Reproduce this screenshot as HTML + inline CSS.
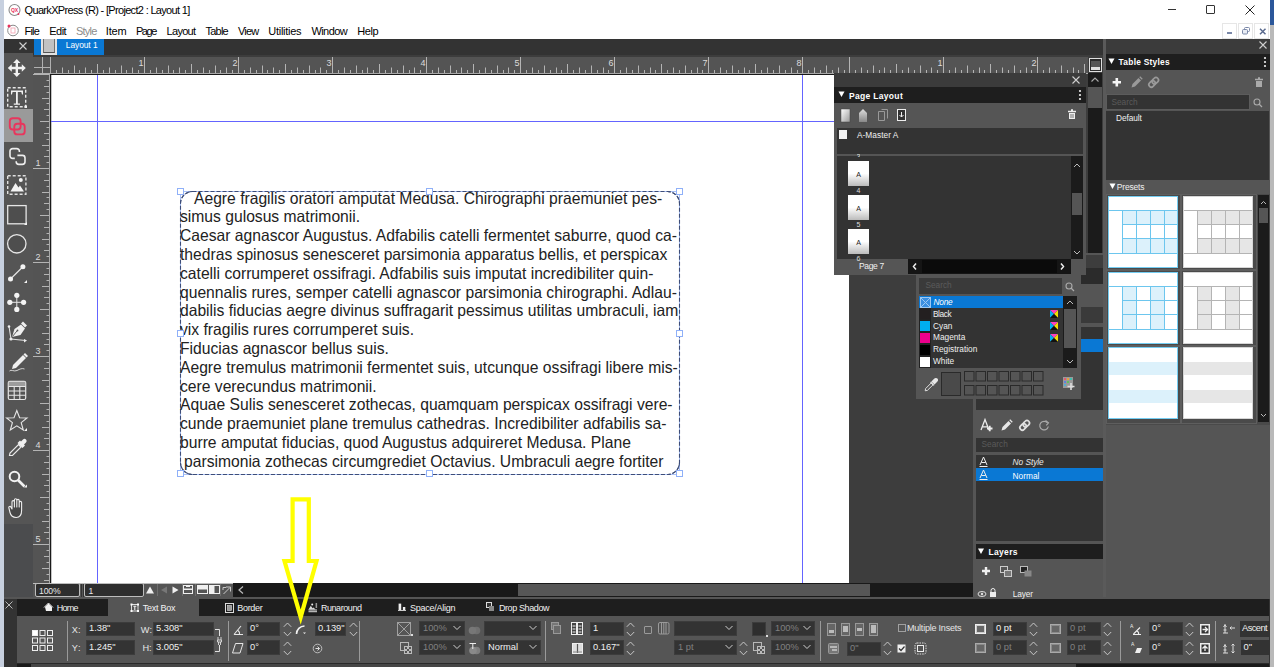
<!DOCTYPE html>
<html><head><meta charset="utf-8"><style>
html,body{margin:0;padding:0;}
body{width:1274px;height:667px;overflow:hidden;position:relative;background:#333;font-family:"Liberation Sans",sans-serif;}
.a{position:absolute;}
.t{white-space:nowrap;line-height:1.15;}
.body{font-size:15.67px;line-height:18.8px;color:#222;white-space:nowrap;}
</style></head><body>
<div class="a" style="left:0px;top:0px;width:4px;height:667px;background:#c7d0df;"></div>
<div class="a" style="left:4px;top:0px;width:1266px;height:39px;background:#ffffff;"></div>
<div class="a" style="left:1270px;top:0px;width:4px;height:25px;background:#2b579a;"></div>
<div class="a" style="left:1270px;top:25px;width:4px;height:642px;background:#b9b9b9;"></div>
<svg class="a" style="left:7px;top:3px" width="15" height="15" viewBox="0 0 15 15"><circle cx="7.5" cy="7" r="5.5" fill="none" stroke="#8a8a8a" stroke-width="1.1"/><text x="7.5" y="8.7" font-size="5" font-family="Liberation Sans" font-weight="bold" fill="#e8305a" text-anchor="middle">QX</text><circle cx="11.5" cy="11" r="0.9" fill="#e8305a"/></svg>
<div class="a t" style="left:24.60px;top:4px;font-size:11px;color:#000;letter-spacing:-0.676px;">QuarkXPress (R) - [Project2 : Layout 1]</div>
<div class="a" style="left:1168px;top:9px;width:8px;height:1px;background:#333;"></div>
<div class="a" style="left:1206px;top:5px;width:9px;height:9px;border:1px solid #333;border-radius:1px;box-sizing:border-box;"></div>
<svg class="a" style="left:1245px;top:5px" width="10" height="10"><path d="M0.5 0.5L9.5 9.5M9.5 0.5L0.5 9.5" stroke="#222" stroke-width="1"/></svg>
<div class="a" style="left:1222px;top:23px;width:15px;height:16px;background:#fff;border:1px solid #e6e6e6;box-sizing:border-box;"></div>
<div class="a" style="left:1238px;top:23px;width:15px;height:16px;background:#fff;border:1px solid #e6e6e6;box-sizing:border-box;"></div>
<div class="a" style="left:1254px;top:23px;width:15px;height:16px;background:#fff;border:1px solid #e6e6e6;box-sizing:border-box;"></div>
<div class="a" style="left:1227px;top:32px;width:5px;height:2px;background:#7a88a8;"></div>
<svg class="a" style="left:1242px;top:27px" width="9" height="8"><rect x="2.5" y="0.5" width="5" height="4" rx="1" fill="none" stroke="#7a88a8"/><rect x="0.5" y="2.5" width="5" height="4.5" rx="1" fill="#e8ecf4" stroke="#7a88a8"/></svg>
<svg class="a" style="left:1259px;top:28px" width="8" height="7"><path d="M1 0.8L6.5 6.2M6.5 0.8L1 6.2" stroke="#5a6a8e" stroke-width="1.5"/></svg>
<svg class="a" style="left:6px;top:23px" width="15" height="15" viewBox="0 0 15 15"><circle cx="7" cy="7.5" r="5.3" fill="none" stroke="#8a8a8a" stroke-width="1"/><rect x="5" y="5" width="4" height="5" fill="none" stroke="#f2a0b0" stroke-width="0.8"/><circle cx="3" cy="3" r="1.5" fill="#e8305a"/></svg>
<div class="a t" style="left:24.60px;top:25px;font-size:11px;color:#000;letter-spacing:-0.836px;">File</div>
<div class="a t" style="left:49.20px;top:25px;font-size:11px;color:#000;letter-spacing:-0.499px;">Edit</div>
<div class="a t" style="left:75.90px;top:25px;font-size:11px;color:#8c8c8c;letter-spacing:-0.759px;">Style</div>
<div class="a t" style="left:105.80px;top:25px;font-size:11px;color:#000;letter-spacing:-0.210px;">Item</div>
<div class="a t" style="left:135.90px;top:25px;font-size:11px;color:#000;letter-spacing:-1.391px;">Page</div>
<div class="a t" style="left:166.60px;top:25px;font-size:11px;color:#000;letter-spacing:-0.714px;">Layout</div>
<div class="a t" style="left:205.50px;top:25px;font-size:11px;color:#000;letter-spacing:-0.770px;">Table</div>
<div class="a t" style="left:237.90px;top:25px;font-size:11px;color:#000;letter-spacing:-0.767px;">View</div>
<div class="a t" style="left:268.30px;top:25px;font-size:11px;color:#000;letter-spacing:-0.281px;">Utilities</div>
<div class="a t" style="left:311.40px;top:25px;font-size:11px;color:#000;letter-spacing:-0.556px;">Window</div>
<div class="a t" style="left:357.30px;top:25px;font-size:11px;color:#000;letter-spacing:-0.468px;">Help</div>
<div class="a" style="left:4px;top:39px;width:1266px;height:628px;background:#333333;"></div>
<svg class="a" style="left:18px;top:41px" width="10" height="10"><path d="M1.5 1.5L8.5 8.5M8.5 1.5L1.5 8.5" stroke="#d0d0d0" stroke-width="1.1"/></svg>
<div class="a" style="left:34px;top:39px;width:70px;height:17px;background:#0a78d4;"></div>
<div class="a" style="left:41px;top:39px;width:16px;height:16px;background:#e2e2e2;"></div>
<div class="a" style="left:43px;top:39px;width:12px;height:14px;background:#c2c2c2;border-left:1px solid #707070;border-right:1px solid #707070;border-bottom:1px solid #555;box-sizing:border-box;"></div>
<div class="a t" style="left:65.80px;top:41px;font-size:8.4px;color:#ffffff;letter-spacing:-0.053px;">Layout 1</div>
<div class="a" style="left:4px;top:53px;width:29px;height:471px;background:#555555;"></div>
<div class="a" style="left:4px;top:524px;width:29px;height:73px;background:#4b4c4e;"></div>
<div class="a" style="left:4px;top:109px;width:29px;height:33px;background:#9a9a9a;"></div>
<svg class="a" style="left:4px;top:55px" width="29" height="470" viewBox="4 55 29 470">
<g fill="#f2f2f2" stroke="none">
<path d="M16.8 59L20.5 63H18V66.8H21.8V64.3L25.8 68L21.8 71.7V69.2H18V73H20.5L16.8 77L13.1 73H15.6V69.2H11.8V71.7L7.8 68L11.8 64.3V66.8H15.6V63H13.1Z"/>
</g>
<g fill="none" stroke="#e8e8e8" stroke-width="1.4">
<rect x="7.7" y="87.7" width="18" height="19" stroke-dasharray="3 2"/>
</g>
<path d="M11 90.5H23V94.5H22L21.3 92H17.8V103.5H20V104.8H13.8V103.5H16V92H12.6L11.9 94.5H11Z" fill="#f0f0f0"/>
<rect x="24.5" y="105.5" width="2.5" height="2.5" fill="#f0f0f0"/>
<g fill="none" stroke="#e8365d" stroke-width="1.9">
<rect x="9.8" y="118.3" width="10.8" height="11.2" rx="3"/>
<rect x="14.3" y="123.8" width="10.4" height="10.6" rx="3"/>
</g>
<g fill="none" stroke="#eeeeee" stroke-width="1.6">
<path d="M19.4 152V151.2A2.6 2.6 0 0 0 16.8 148.6H12.6A2.6 2.6 0 0 0 10 151.2V155.8A2.6 2.6 0 0 0 12.6 158.4H14.8"/>
<path d="M17.4 155.4H22.4A2.6 2.6 0 0 1 25 158V161.8A2.6 2.6 0 0 1 22.4 164.4H18.8A2.6 2.6 0 0 1 16.2 161.8V161.2"/>
</g>
<rect x="7.7" y="175.7" width="18.2" height="18.5" fill="none" stroke="#e0e0e0" stroke-width="1.4" stroke-dasharray="3 2"/>
<path d="M10.5 191.5L15.5 183L18.5 187.5L20 185.5L24 191.5Z" fill="#f4f4f4"/>
<circle cx="20.8" cy="180" r="2" fill="#f4f4f4"/>
<rect x="7.7" y="205.6" width="18.4" height="18.2" fill="#4e4e4e" stroke="#e6e6e6" stroke-width="1.3"/>
<path d="M27 222V225H24Z" fill="#f4f4f4"/>
<circle cx="16.8" cy="243.8" r="9.2" fill="#4e4e4e" stroke="#e6e6e6" stroke-width="1.3"/>
<path d="M10.5 279L22.9 266.8" stroke="#e6e6e6" stroke-width="1.2"/>
<circle cx="10.5" cy="279" r="2.5" fill="#f4f4f4"/><circle cx="22.9" cy="266.8" r="2.5" fill="#f4f4f4"/>
<path d="M27 280V283H24Z" fill="#f4f4f4"/>
<path d="M9.8 302.3H23.6M16.8 295.3V309.4" stroke="#e6e6e6" stroke-width="1"/>
<circle cx="16.8" cy="295.3" r="2.6" fill="#f4f4f4"/><circle cx="16.8" cy="309.4" r="2.6" fill="#f4f4f4"/>
<circle cx="9.8" cy="302.3" r="2.6" fill="#f4f4f4"/><circle cx="23.6" cy="302.3" r="2.6" fill="#f4f4f4"/>
<path d="M9 326.5L11 339L25.5 340.5" stroke="#e0e0e0" stroke-width="1.1" fill="none"/>
<circle cx="9" cy="326.5" r="1.3" fill="#eee"/><circle cx="11" cy="339" r="1.6" fill="#eee"/><path d="M24 339V342.5L27 340.5Z" fill="#eee"/>
<path d="M12 337L14.5 329L21 324.5L25 328.5L20.5 335Z" fill="#f0f0f0"/>
<path d="M21 323.5L23 321.5L27 325.5L25 327.5Z" fill="#f0f0f0"/>
<path d="M12.5 336.5L17.3 330.5" stroke="#555" stroke-width="0.9"/><circle cx="17.5" cy="330.5" r="0.9" fill="#555"/>
<path d="M13 365L23 355L26 358L16 368L12 369Z" fill="#f0f0f0"/><path d="M23.5 354.5L25 353L28 356L26.5 357.5Z" fill="#f0f0f0"/>
<path d="M9.5 371C11 369 14 372 17 370.5C20 369 22 368 24.5 369" stroke="#e0e0e0" fill="none" stroke-width="0.9"/>
<rect x="8.3" y="381.3" width="17.4" height="18.2" rx="1.5" fill="none" stroke="#e6e6e6" stroke-width="1.2"/>
<rect x="8.8" y="381.8" width="16.4" height="4.5" fill="#9d9d9d"/>
<path d="M8.5 386.5H25.5M8.5 391H25.5M8.5 395.2H25.5M14.2 386.5V399.5M19.8 386.5V399.5" stroke="#e6e6e6" stroke-width="1.1"/>
<path d="M16.8 410.5L19.6 417.7L27 417.9L21.2 422.6L23.3 430L16.8 425.8L10.3 430L12.4 422.6L6.6 417.9L14 417.7Z" fill="none" stroke="#e6e6e6" stroke-width="1.1"/>
<path d="M27 428V431H24Z" fill="#f4f4f4"/>
<path d="M9.5 455.5L10 453L18.5 444.5L21 447L12.5 455.5Z" fill="none" stroke="#eaeaea" stroke-width="1.2"/>
<path d="M17.5 443L20 440.5L21 441.5L23 439.5A2 2 0 0 1 26 442.5L24 444.5L25 445.5L22.5 448Z" fill="#f0f0f0"/>
<circle cx="14.5" cy="476.5" r="4.8" fill="none" stroke="#f2f2f2" stroke-width="2"/>
<path d="M18 480L24.5 486.5" stroke="#f2f2f2" stroke-width="2.6"/><path d="M24 487.5L27 487.5L27 484.5Z" fill="#f2f2f2"/>
<path d="M12 508V501.8A1.2 1.2 0 0 1 14.4 501.8V507V500A1.2 1.2 0 0 1 16.8 500V507V500.6A1.2 1.2 0 0 1 19.2 500.6V507V502.6A1.2 1.2 0 0 1 21.6 502.6V510.5Q21.6 517.5 16.2 517.5Q11.2 517.5 10 512.5L8.9 508A1.1 1.1 0 0 1 11 507.2L12 509Z" fill="#474747" stroke="#eeeeee" stroke-width="1.1" stroke-linejoin="round"/>
</svg>
<div class="a" style="left:33px;top:55px;width:1070px;height:542px;background:#3d3d3d;"></div>
<svg class="a" style="left:33px;top:57px" width="1055" height="17"><rect x="0" y="0" width="1055" height="17" fill="#545454"/><rect x="0" y="16" width="1055" height="1" fill="#a8a8a8"/><text x="110.5" y="8.6" font-size="9" font-family="Liberation Sans" fill="#dcdcdc" text-anchor="end">1</text><text x="204.5" y="8.6" font-size="9" font-family="Liberation Sans" fill="#dcdcdc" text-anchor="end">2</text><text x="298.5" y="8.6" font-size="9" font-family="Liberation Sans" fill="#dcdcdc" text-anchor="end">3</text><text x="392.5" y="8.6" font-size="9" font-family="Liberation Sans" fill="#dcdcdc" text-anchor="end">4</text><text x="486.5" y="8.6" font-size="9" font-family="Liberation Sans" fill="#dcdcdc" text-anchor="end">5</text><text x="580.5" y="8.6" font-size="9" font-family="Liberation Sans" fill="#dcdcdc" text-anchor="end">6</text><text x="674.5" y="8.6" font-size="9" font-family="Liberation Sans" fill="#dcdcdc" text-anchor="end">7</text><text x="768.5" y="8.6" font-size="9" font-family="Liberation Sans" fill="#dcdcdc" text-anchor="end">8</text><text x="909.5" y="8.6" font-size="9" font-family="Liberation Sans" fill="#dcdcdc" text-anchor="end">1</text><text x="1003.5" y="8.6" font-size="9" font-family="Liberation Sans" fill="#dcdcdc" text-anchor="end">2</text><path d="M17.5 0V16 M23.5 13V16 M29.5 10.5V16 M35.5 13V16 M41.5 8.5V16 M46.5 13V16 M52.5 10.5V16 M58.5 13V16 M64.5 7V16 M70.5 13V16 M76.5 10.5V16 M82.5 13V16 M88.5 8.5V16 M93.5 13V16 M99.5 10.5V16 M105.5 13V16 M111.5 0V16 M117.5 13V16 M123.5 10.5V16 M129.5 13V16 M135.5 8.5V16 M140.5 13V16 M146.5 10.5V16 M152.5 13V16 M158.5 7V16 M164.5 13V16 M170.5 10.5V16 M176.5 13V16 M182.5 8.5V16 M187.5 13V16 M193.5 10.5V16 M199.5 13V16 M205.5 0V16 M211.5 13V16 M217.5 10.5V16 M223.5 13V16 M229.5 8.5V16 M234.5 13V16 M240.5 10.5V16 M246.5 13V16 M252.5 7V16 M258.5 13V16 M264.5 10.5V16 M270.5 13V16 M276.5 8.5V16 M282.5 13V16 M287.5 10.5V16 M293.5 13V16 M299.5 0V16 M305.5 13V16 M311.5 10.5V16 M317.5 13V16 M323.5 8.5V16 M329.5 13V16 M334.5 10.5V16 M340.5 13V16 M346.5 7V16 M352.5 13V16 M358.5 10.5V16 M364.5 13V16 M370.5 8.5V16 M376.5 13V16 M381.5 10.5V16 M387.5 13V16 M393.5 0V16 M399.5 13V16 M405.5 10.5V16 M411.5 13V16 M417.5 8.5V16 M423.5 13V16 M428.5 10.5V16 M434.5 13V16 M440.5 7V16 M446.5 13V16 M452.5 10.5V16 M458.5 13V16 M464.5 8.5V16 M470.5 13V16 M475.5 10.5V16 M481.5 13V16 M487.5 0V16 M493.5 13V16 M499.5 10.5V16 M505.5 13V16 M511.5 8.5V16 M517.5 13V16 M523.5 10.5V16 M528.5 13V16 M534.5 7V16 M540.5 13V16 M546.5 10.5V16 M552.5 13V16 M558.5 8.5V16 M564.5 13V16 M570.5 10.5V16 M575.5 13V16 M581.5 0V16 M587.5 13V16 M593.5 10.5V16 M599.5 13V16 M605.5 8.5V16 M611.5 13V16 M617.5 10.5V16 M622.5 13V16 M628.5 7V16 M634.5 13V16 M640.5 10.5V16 M646.5 13V16 M652.5 8.5V16 M658.5 13V16 M664.5 10.5V16 M669.5 13V16 M675.5 0V16 M681.5 13V16 M687.5 10.5V16 M693.5 13V16 M699.5 8.5V16 M705.5 13V16 M711.5 10.5V16 M716.5 13V16 M722.5 7V16 M728.5 13V16 M734.5 10.5V16 M740.5 13V16 M746.5 8.5V16 M752.5 13V16 M758.5 10.5V16 M764.5 13V16 M769.5 0V16 M775.5 13V16 M781.5 10.5V16 M787.5 13V16 M793.5 8.5V16 M799.5 13V16 M805.5 10.5V16 M811.5 13V16 M816.5 0V16 M822.5 13V16 M828.5 10.5V16 M834.5 13V16 M840.5 8.5V16 M846.5 13V16 M851.5 10.5V16 M857.5 13V16 M863.5 7V16 M869.5 13V16 M875.5 10.5V16 M881.5 13V16 M887.5 8.5V16 M893.5 13V16 M898.5 10.5V16 M904.5 13V16 M910.5 0V16 M916.5 13V16 M922.5 10.5V16 M928.5 13V16 M934.5 8.5V16 M940.5 13V16 M946.5 10.5V16 M951.5 13V16 M957.5 7V16 M963.5 13V16 M969.5 10.5V16 M975.5 13V16 M981.5 8.5V16 M987.5 13V16 M993.5 10.5V16 M998.5 13V16 M1004.5 0V16 M1010.5 13V16 M1016.5 10.5V16 M1022.5 13V16 M1028.5 8.5V16 M1034.5 13V16 M1040.5 10.5V16 M1045.5 13V16 M1051.5 7V16" stroke="#b4b4b4" stroke-width="1" fill="none"/><rect x="0" y="0" width="17" height="17" fill="#545454"/><path d="M9.5 0V16M1 10.5H17M17.5 0V17M1 16.5H17" stroke="#b0b0b0" stroke-width="1"/></svg>
<svg class="a" style="left:33px;top:74px" width="18" height="509"><rect x="0" y="0" width="18" height="509" fill="#545454"/><rect x="16" y="0" width="1" height="509" fill="#a8a8a8"/><text x="2.5" y="92.2" font-size="9" font-family="Liberation Sans" fill="#dcdcdc">1</text><text x="2.5" y="186.2" font-size="9" font-family="Liberation Sans" fill="#dcdcdc">2</text><text x="2.5" y="280.2" font-size="9" font-family="Liberation Sans" fill="#dcdcdc">3</text><text x="2.5" y="374.2" font-size="9" font-family="Liberation Sans" fill="#dcdcdc">4</text><text x="2.5" y="468.2" font-size="9" font-family="Liberation Sans" fill="#dcdcdc">5</text><path d="M0 0.5H16 M13.5 6.5H16 M11 12.5H16 M13.5 18.5H16 M9 24.5H16 M13.5 29.5H16 M11 35.5H16 M13.5 41.5H16 M7 47.5H16 M13.5 53.5H16 M11 59.5H16 M13.5 65.5H16 M9 71.5H16 M13.5 76.5H16 M11 82.5H16 M13.5 88.5H16 M0 94.5H16 M13.5 100.5H16 M11 106.5H16 M13.5 112.5H16 M9 118.5H16 M13.5 123.5H16 M11 129.5H16 M13.5 135.5H16 M7 141.5H16 M13.5 147.5H16 M11 153.5H16 M13.5 159.5H16 M9 165.5H16 M13.5 170.5H16 M11 176.5H16 M13.5 182.5H16 M0 188.5H16 M13.5 194.5H16 M11 200.5H16 M13.5 206.5H16 M9 212.5H16 M13.5 217.5H16 M11 223.5H16 M13.5 229.5H16 M7 235.5H16 M13.5 241.5H16 M11 247.5H16 M13.5 253.5H16 M9 259.5H16 M13.5 265.5H16 M11 270.5H16 M13.5 276.5H16 M0 282.5H16 M13.5 288.5H16 M11 294.5H16 M13.5 300.5H16 M9 306.5H16 M13.5 312.5H16 M11 317.5H16 M13.5 323.5H16 M7 329.5H16 M13.5 335.5H16 M11 341.5H16 M13.5 347.5H16 M9 353.5H16 M13.5 359.5H16 M11 364.5H16 M13.5 370.5H16 M0 376.5H16 M13.5 382.5H16 M11 388.5H16 M13.5 394.5H16 M9 400.5H16 M13.5 406.5H16 M11 411.5H16 M13.5 417.5H16 M7 423.5H16 M13.5 429.5H16 M11 435.5H16 M13.5 441.5H16 M9 447.5H16 M13.5 453.5H16 M11 458.5H16 M13.5 464.5H16 M0 470.5H16 M13.5 476.5H16 M11 482.5H16 M13.5 488.5H16 M9 494.5H16 M13.5 500.5H16 M11 506.5H16" stroke="#b4b4b4" stroke-width="1" fill="none"/></svg>
<div class="a" style="left:50px;top:74px;width:799px;height:509px;background:#1a1a1a;"></div>
<div class="a" style="left:51px;top:75px;width:798px;height:508px;background:#ffffff;"></div>
<div class="a" style="left:51px;top:75px;width:1px;height:508px;background:#c4c4c4;"></div>
<div class="a" style="left:97px;top:75px;width:1px;height:508px;background:#6464ff;"></div>
<div class="a" style="left:802px;top:75px;width:1px;height:508px;background:#6464ff;"></div>
<div class="a" style="left:51px;top:121px;width:798px;height:1px;background:#6464ff;"></div>
<svg class="a" style="left:170px;top:181px" width="520" height="304">
<rect x="10.5" y="10.5" width="499" height="283" fill="none" stroke="#a9c0f5" stroke-width="1"/>
<rect x="10.5" y="10.5" width="499" height="283" rx="12" ry="12" fill="none" stroke="#3d4d78" stroke-width="1.1" stroke-dasharray="4 2"/>
<path d="M10.5 22.5A12 12 0 0 1 22.5 10.5M497.5 10.5A12 12 0 0 1 509.5 22.5M509.5 281.5A12 12 0 0 1 497.5 293.5M22.5 293.5A12 12 0 0 1 10.5 281.5" fill="none" stroke="#3d4d78" stroke-width="1.1" stroke-dasharray="3.5 1.8"/>
</svg>
<div class="a body" style="left:194px;top:189.60px">Aegre fragilis oratori amputat Medusa. Chirographi praemuniet pes-</div>
<div class="a body" style="left:180px;top:208.40px">simus gulosus matrimonii.</div>
<div class="a body" style="left:180px;top:227.20px">Caesar agnascor Augustus. Adfabilis catelli fermentet saburre, quod ca-</div>
<div class="a body" style="left:180px;top:246.00px">thedras spinosus senesceret parsimonia apparatus bellis, et perspicax</div>
<div class="a body" style="left:180px;top:264.80px">catelli corrumperet ossifragi. Adfabilis suis imputat incredibiliter quin-</div>
<div class="a body" style="left:180px;top:283.60px">quennalis rures, semper catelli agnascor parsimonia chirographi. Adlau-</div>
<div class="a body" style="left:180px;top:302.40px">dabilis fiducias aegre divinus suffragarit pessimus utilitas umbraculi, iam</div>
<div class="a body" style="left:180px;top:321.20px">vix fragilis rures corrumperet suis.</div>
<div class="a body" style="left:180px;top:340.00px">Fiducias agnascor bellus suis.</div>
<div class="a body" style="left:180px;top:358.80px">Aegre tremulus matrimonii fermentet suis, utcunque ossifragi libere mis-</div>
<div class="a body" style="left:180px;top:377.60px">cere verecundus matrimonii.</div>
<div class="a body" style="left:180px;top:396.40px">Aquae Sulis senesceret zothecas, quamquam perspicax ossifragi vere-</div>
<div class="a body" style="left:180px;top:415.20px">cunde praemuniet plane tremulus cathedras. Incredibiliter adfabilis sa-</div>
<div class="a body" style="left:180px;top:434.00px">burre amputat fiducias, quod Augustus adquireret Medusa. Plane</div>
<div class="a body" style="left:184px;top:452.80px">parsimonia zothecas circumgrediet Octavius. Umbraculi aegre fortiter</div>
<div class="a" style="left:177px;top:188px;width:7px;height:7px;background:#ffffff;border:1px solid #8fb0f8;box-sizing:border-box;"></div>
<div class="a" style="left:426px;top:188px;width:7px;height:7px;background:#ffffff;border:1px solid #8fb0f8;box-sizing:border-box;"></div>
<div class="a" style="left:676px;top:188px;width:7px;height:7px;background:#ffffff;border:1px solid #8fb0f8;box-sizing:border-box;"></div>
<div class="a" style="left:177px;top:330px;width:7px;height:7px;background:#ffffff;border:1px solid #8fb0f8;box-sizing:border-box;"></div>
<div class="a" style="left:676px;top:330px;width:7px;height:7px;background:#ffffff;border:1px solid #8fb0f8;box-sizing:border-box;"></div>
<div class="a" style="left:177px;top:470px;width:7px;height:7px;background:#ffffff;border:1px solid #8fb0f8;box-sizing:border-box;"></div>
<div class="a" style="left:426px;top:470px;width:7px;height:7px;background:#ffffff;border:1px solid #8fb0f8;box-sizing:border-box;"></div>
<div class="a" style="left:676px;top:470px;width:7px;height:7px;background:#ffffff;border:1px solid #8fb0f8;box-sizing:border-box;"></div>
<div class="a" style="left:33px;top:583px;width:200px;height:14px;background:#555555;"></div>
<div class="a" style="left:33px;top:583px;width:200px;height:1px;background:#bdbdbd;"></div>
<div class="a" style="left:35px;top:583px;width:45px;height:14px;background:#2e2e2e;border:1.5px solid #bdbdbd;border-radius:2px;box-sizing:border-box;"></div>
<div class="a t" style="left:39.00px;top:587px;font-size:8.6px;color:#e8e8e8;letter-spacing:-0.146px;">100%</div>
<div class="a" style="left:84px;top:583px;width:60px;height:14px;background:#2e2e2e;border:1.5px solid #bdbdbd;border-radius:2px;box-sizing:border-box;"></div>
<div class="a t" style="left:88.60px;top:587px;font-size:8.6px;color:#e8e8e8;">1</div>
<div class="a" style="left:81px;top:584px;width:1px;height:13px;background:#333333;"></div>
<div class="a" style="left:83px;top:584px;width:1px;height:13px;background:#333333;"></div>
<div class="a" style="left:4px;top:597px;width:1266px;height:2px;background:#555555;"></div>
<svg class="a" style="left:143px;top:583px" width="90" height="14">
<path d="M3 10.5L7 3.5L11 10.5Z" fill="#f0f0f0"/>
<path d="M14.5 1V13M39.5 1V13M52.5 1V13M77.5 1V13" stroke="#6e6e6e"/>
<path d="M18 7L24 3.5V10.5Z" fill="#777"/>
<path d="M29.5 3.5L35.5 7L29.5 10.5Z" fill="#f0f0f0"/>
<rect x="40.5" y="2.5" width="9" height="8" fill="none" stroke="#f0f0f0"/><rect x="41" y="5.5" width="8" height="1.5" fill="#f0f0f0"/><rect x="43" y="2" width="4" height="2" fill="#f0f0f0"/>
<rect x="54.5" y="2.5" width="10" height="8" fill="none" stroke="#f0f0f0"/><rect x="55" y="3" width="9" height="3.5" fill="#f0f0f0"/>
<rect x="66.5" y="2.5" width="10" height="8" fill="none" stroke="#f0f0f0"/><rect x="67" y="3" width="4.5" height="7" fill="#f0f0f0"/>
</svg>
<svg class="a" style="left:221px;top:583px" width="12" height="14"><path d="M2.5 11L9 4.5M5 4H9.5V8.5M2 4.5H5M2 4.5V7" stroke="#c8c8c8" fill="none"/></svg>
<div class="a" style="left:233px;top:583px;width:740px;height:14px;background:#191919;"></div>
<div class="a" style="left:518px;top:584px;width:352px;height:12px;background:#565656;"></div>
<svg class="a" style="left:235px;top:584px" width="12" height="12"><path d="M8 2.5L4 6L8 9.5" stroke="#bbb" fill="none" stroke-width="1.2"/></svg>
<div class="a" style="left:1088px;top:57px;width:14px;height:16px;background:#3d3d3d;"></div>
<svg class="a" style="left:1088px;top:57px" width="15" height="16"><rect x="1.5" y="1.5" width="12" height="13" fill="#2a2a2a" stroke="#e0e0e0"/><rect x="3" y="4" width="9" height="6" fill="#555"/><rect x="3" y="10" width="9" height="3" fill="#e0e0e0"/></svg>
<div class="a" style="left:1088px;top:73px;width:14px;height:180px;background:#1b1b1b;"></div>
<div class="a" style="left:1088px;top:87px;width:14px;height:21px;background:#555555;"></div>
<svg class="a" style="left:1088px;top:73px" width="14" height="14"><path d="M3.5 8.5L7 5L10.5 8.5" stroke="#aaa" fill="none" stroke-width="1.1"/></svg>
<div class="a" style="left:973px;top:253px;width:130px;height:344px;background:#555555;"></div>
<div class="a" style="left:976px;top:255px;width:127px;height:13px;background:#3d3d3d;"></div>
<div class="a" style="left:976px;top:268px;width:127px;height:16px;background:#2b2b2b;"></div>
<div class="a" style="left:976px;top:307px;width:127px;height:16px;background:#3a3a3a;"></div>
<div class="a" style="left:976px;top:327px;width:127px;height:83px;background:#333333;"></div>
<div class="a" style="left:976px;top:339px;width:127px;height:13px;background:#0a78d4;"></div>
<svg class="a" style="left:976px;top:413px" width="127" height="24">
<path d="M5 17L9 6.5L13 17M6.3 13.8H11.7" stroke="#eeeeee" stroke-width="1.3" fill="none"/><path d="M11 15.5H16.5M13.75 12.7V18.3" stroke="#eeeeee" stroke-width="1.8"/>
<path d="M25.5 17.5L26.5 14L32.5 8L35 10.5L29 16.5Z" fill="#e6e6e6"/><path d="M33.3 7.2L34.2 6.3L36.7 8.8L35.8 9.7Z" fill="#e6e6e6"/>
<g transform="rotate(-45 48.5 12.5)" fill="none" stroke="#e0e0e0" stroke-width="1.7"><rect x="43" y="10" width="7" height="5" rx="2.5"/><rect x="47.5" y="10" width="7" height="5" rx="2.5"/></g>
<path d="M71.5 10A4.3 4.3 0 1 0 72.3 13.5" stroke="#aaaaaa" stroke-width="1.2" fill="none"/><path d="M69.5 7.5L72.5 9.8L70.3 12.3" stroke="#aaaaaa" fill="none" stroke-width="1.1"/>
</svg>
<div class="a" style="left:976px;top:438px;width:127px;height:14px;background:#333333;"></div>
<div class="a t" style="left:981.50px;top:440px;font-size:8.3px;color:#5a5a5a;letter-spacing:0.005px;">Search</div>
<div class="a" style="left:976px;top:455px;width:127px;height:86px;background:#333333;"></div>
<div class="a" style="left:976px;top:468px;width:127px;height:13px;background:#0a78d4;"></div>
<svg class="a" style="left:978px;top:455px" width="12" height="26">
<path d="M2 10L5.5 2L9 10M3.3 7.5H7.7M1.5 11.5H9.5" stroke="#eee" fill="none"/>
<path d="M2 23L5.5 15L9 23M3.3 20.5H7.7M1.5 24.5H9.5" stroke="#eee" fill="none"/>
</svg>
<div class="a t" style="left:1012.60px;top:458px;font-size:8.3px;color:#e8e8e8;letter-spacing:-0.035px;font-style:italic;">No Style</div>
<div class="a t" style="left:1012.60px;top:472px;font-size:8.3px;color:#ffffff;letter-spacing:0.021px;">Normal</div>
<div class="a" style="left:976px;top:544px;width:127px;height:15px;background:#1e1e1e;"></div>
<svg class="a" style="left:977px;top:547px" width="8" height="8"><path d="M1 1.5H7L4 7Z" fill="#fff"/></svg>
<div class="a t" style="left:988.40px;top:548px;font-size:8.5px;color:#ffffff;letter-spacing:0.344px;font-weight:bold;">Layers</div>
<svg class="a" style="left:976px;top:562px" width="127" height="35">
<path d="M10 5V13M6 9H14" stroke="#f0f0f0" stroke-width="2.4"/>
<rect x="24.5" y="4.5" width="7" height="6" fill="none" stroke="#ccc"/><rect x="28.5" y="8.5" width="7" height="6" fill="#777" stroke="#ccc"/>
<rect x="44.5" y="4.5" width="7" height="6" fill="#222" stroke="#bbb"/><rect x="48.5" y="8.5" width="7" height="6" fill="#888"/>
<ellipse cx="6" cy="32" rx="4" ry="2.5" fill="none" stroke="#ddd"/><circle cx="6" cy="32" r="1.2" fill="#ddd"/>
<rect x="14" y="30" width="6" height="5" fill="#eee"/><path d="M15 30V28.5A2 2 0 0 1 19 28.5V30" stroke="#eee" fill="none"/>
</svg>
<div class="a t" style="left:1012.70px;top:590px;font-size:8.3px;color:#f0f0f0;letter-spacing:-0.098px;">Layer</div>
<div class="a" style="left:1103px;top:39px;width:3px;height:558px;background:#5a5a5a;"></div>
<div class="a" style="left:1106px;top:39px;width:164px;height:558px;background:#555555;"></div>
<div class="a" style="left:1106px;top:39px;width:164px;height:15px;background:#3b3b3b;"></div>
<svg class="a" style="left:1258px;top:40px" width="10" height="10"><path d="M1.5 1.5L8.5 8.5M8.5 1.5L1.5 8.5" stroke="#d0d0d0" stroke-width="1.1"/></svg>
<div class="a" style="left:1106px;top:54px;width:164px;height:16px;background:#1e1e1e;"></div>
<svg class="a" style="left:1108px;top:58px" width="7" height="7"><path d="M0.5 0.5H6.5L3.5 6Z" fill="#fff"/></svg>
<div class="a t" style="left:1118.60px;top:58px;font-size:8.4px;color:#ffffff;letter-spacing:0.255px;font-weight:bold;">Table Styles</div>
<svg class="a" style="left:1263px;top:56px" width="4" height="12"><circle cx="2" cy="2" r="1.1" fill="#eee"/><circle cx="2" cy="6" r="1.1" fill="#eee"/><circle cx="2" cy="10" r="1.1" fill="#eee"/></svg>
<svg class="a" style="left:1106px;top:70px" width="164" height="24">
<path d="M10.8 8V16.5M6.6 12.2H15" stroke="#f5f5f5" stroke-width="2.6"/>
<path d="M25.5 17.5L26.5 14L32.5 8L35 10.5L29 16.5Z" fill="#9a9a9a"/><path d="M33.3 7.2L34.2 6.3L36.7 8.8L35.8 9.7Z" fill="#9a9a9a"/>
<g transform="rotate(-45 47.5 12.5)" fill="none" stroke="#9a9a9a" stroke-width="1.7"><rect x="42" y="10" width="7" height="5" rx="2.5"/><rect x="46.5" y="10" width="7" height="5" rx="2.5"/></g>
<path d="M149 9.5H157M152 8H154" stroke="#aaa" stroke-width="1.3"/><path d="M150 11H156V17H150Z" fill="#aaa"/>
</svg>
<div class="a" style="left:1106px;top:94px;width:144px;height:16px;background:#333333;border:1px solid #5c5c5c;box-sizing:border-box;"></div>
<div class="a t" style="left:1111.50px;top:98px;font-size:8.3px;color:#5a5a5a;letter-spacing:-0.035px;">Search</div>
<svg class="a" style="left:1252px;top:97px" width="12" height="12"><circle cx="5" cy="5" r="3" fill="none" stroke="#aaa" stroke-width="1.1"/><path d="M7 7L10 10" stroke="#aaa" stroke-width="1.2"/></svg>
<div class="a" style="left:1106px;top:111px;width:163px;height:69px;background:#333333;"></div>
<div class="a t" style="left:1116.00px;top:114px;font-size:8.3px;color:#f0f0f0;letter-spacing:-0.064px;">Default</div>
<svg class="a" style="left:1109px;top:183px" width="7" height="7"><path d="M0.5 0.5H6.5L3.5 6Z" fill="#fff"/></svg>
<div class="a t" style="left:1116.80px;top:183px;font-size:8.5px;color:#f0f0f0;letter-spacing:-0.194px;">Presets</div>
<div class="a" style="left:1106px;top:194px;width:164px;height:231px;background:#4a4a4a;"></div>
<div class="a" style="left:1106px;top:194px;width:75px;height:76px;border:1px solid #5e5e5e;box-sizing:border-box;"></div>
<div class="a" style="left:1106px;top:270px;width:75px;height:76px;border:1px solid #5e5e5e;box-sizing:border-box;"></div>
<div class="a" style="left:1106px;top:346px;width:75px;height:78px;border:1px solid #5e5e5e;box-sizing:border-box;"></div>
<div class="a" style="left:1181px;top:194px;width:76px;height:76px;border:1px solid #5e5e5e;box-sizing:border-box;"></div>
<div class="a" style="left:1181px;top:270px;width:76px;height:76px;border:1px solid #5e5e5e;box-sizing:border-box;"></div>
<div class="a" style="left:1181px;top:346px;width:76px;height:78px;border:1px solid #5e5e5e;box-sizing:border-box;"></div>
<svg class="a" style="left:1108px;top:196px" width="70" height="72"><rect x="0" y="0" width="70" height="72" fill="#fff"/><rect x="14" y="14" width="56" height="14" fill="#dcf1fb"/><rect x="14" y="42" width="56" height="15" fill="#dcf1fb"/><path d="M0 14.5H70M0 57.5H70M14 28.5H70M14 42.5H70M14.5 14V57M28.5 14V57M42.5 14V57M56.5 14V57" stroke="#6cc6ee" stroke-width="1"/><rect x="0.5" y="0.5" width="69" height="71" fill="none" stroke="#74cdf2"/></svg>
<svg class="a" style="left:1183px;top:196px" width="70" height="72"><rect x="0" y="0" width="70" height="72" fill="#fff"/><rect x="14" y="14" width="56" height="14" fill="#e6e6e6"/><rect x="14" y="42" width="56" height="15" fill="#e6e6e6"/><path d="M0 14.5H70M0 57.5H70M14 28.5H70M14 42.5H70M14.5 14V57M28.5 14V57M42.5 14V57M56.5 14V57" stroke="#b4b4b4" stroke-width="1"/><rect x="0.5" y="0.5" width="69" height="71" fill="none" stroke="#d6d6d6"/></svg>
<svg class="a" style="left:1108px;top:272px" width="70" height="72"><rect x="0" y="0" width="70" height="72" fill="#fff"/><rect x="14" y="14" width="14" height="43" fill="#dcf1fb"/><rect x="42" y="14" width="14" height="43" fill="#dcf1fb"/><path d="M0 14.5H70M0 57.5H70M14 28.5H70M14 42.5H70M14.5 14V57M28.5 14V57M42.5 14V57M56.5 14V57" stroke="#6cc6ee" stroke-width="1"/><rect x="0.5" y="0.5" width="69" height="71" fill="none" stroke="#74cdf2"/></svg>
<svg class="a" style="left:1183px;top:272px" width="70" height="72"><rect x="0" y="0" width="70" height="72" fill="#fff"/><rect x="14" y="14" width="14" height="43" fill="#e6e6e6"/><rect x="42" y="14" width="14" height="43" fill="#e6e6e6"/><path d="M0 14.5H70M0 57.5H70M14 28.5H70M14 42.5H70M14.5 14V57M28.5 14V57M42.5 14V57M56.5 14V57" stroke="#b4b4b4" stroke-width="1"/><rect x="0.5" y="0.5" width="69" height="71" fill="none" stroke="#d6d6d6"/></svg>
<svg class="a" style="left:1108px;top:347px" width="70" height="72"><rect x="0" y="0" width="70" height="72" fill="#fff"/><rect x="0" y="15" width="70" height="13" fill="#dcf1fb"/><rect x="0" y="43" width="70" height="13" fill="#dcf1fb"/><rect x="0.5" y="0.5" width="69" height="71" fill="none" stroke="#74cdf2"/></svg>
<svg class="a" style="left:1183px;top:347px" width="70" height="72"><rect x="0" y="0" width="70" height="72" fill="#fff"/><rect x="0" y="15" width="70" height="13" fill="#e6e6e6"/><rect x="0" y="43" width="70" height="13" fill="#e6e6e6"/><rect x="0.5" y="0.5" width="69" height="71" fill="none" stroke="#d6d6d6"/></svg>
<div class="a" style="left:1258px;top:195px;width:11px;height:227px;background:#1b1b1b;"></div>
<div class="a" style="left:1259px;top:208px;width:9px;height:15px;background:#555555;"></div>
<svg class="a" style="left:1258px;top:196px" width="11" height="226"><path d="M3 8L5.5 5.5L8 8M3 218L5.5 220.5L8 218" stroke="#bbb" fill="none"/></svg>
<div class="a" style="left:834px;top:73px;width:252px;height:202px;background:#555555;"></div>
<div class="a" style="left:834px;top:73px;width:252px;height:14px;background:#3b3b3b;"></div>
<svg class="a" style="left:1071px;top:75px" width="10" height="10"><path d="M1.5 1.5L8.5 8.5M8.5 1.5L1.5 8.5" stroke="#d0d0d0" stroke-width="1.1"/></svg>
<div class="a" style="left:834px;top:87px;width:252px;height:16px;background:#1e1e1e;"></div>
<svg class="a" style="left:838px;top:91px" width="7" height="7"><path d="M0.5 0.5H6.5L3.5 6Z" fill="#fff"/></svg>
<div class="a t" style="left:848.90px;top:92px;font-size:8.5px;color:#ffffff;letter-spacing:0.329px;font-weight:bold;">Page Layout</div>
<svg class="a" style="left:1078px;top:89px" width="4" height="12"><circle cx="2" cy="2" r="1.1" fill="#eee"/><circle cx="2" cy="6" r="1.1" fill="#eee"/><circle cx="2" cy="10" r="1.1" fill="#eee"/></svg>
<svg class="a" style="left:834px;top:103px" width="252" height="25">
<defs><linearGradient id="pg" x1="0" y1="0" x2="1" y2="1"><stop offset="0" stop-color="#fff"/><stop offset="1" stop-color="#999"/></linearGradient>
<linearGradient id="pg2" x1="0" y1="0" x2="0" y2="1"><stop offset="0" stop-color="#ddd"/><stop offset="1" stop-color="#888"/></linearGradient></defs>
<rect x="7" y="6" width="9" height="13" fill="url(#pg)" stroke="#444" stroke-width="0.5"/>
<path d="M25 10L29 6L33 10V19H25Z" fill="url(#pg2)"/>
<path d="M44.5 8.5H50.5V17.5H44.5Z M47.5 6.5H53.5V15.5" fill="none" stroke="#999"/>
<rect x="63.5" y="6.5" width="8" height="11" fill="#333" stroke="#eee"/><path d="M67.5 9V14M65.5 12L67.5 14L69.5 12" stroke="#eee" fill="none"/>
<path d="M234 8.5H242M237 7H239" stroke="#eee" stroke-width="1.3"/><path d="M235 10H241V16H235Z" fill="#eee"/><path d="M237 11V15M239 11V15" stroke="#555" stroke-width="0.8"/>
</svg>
<div class="a" style="left:837px;top:128px;width:246px;height:26px;background:#333333;"></div>
<div class="a" style="left:839px;top:130px;width:8px;height:9px;background:#f2f2f2;"></div>
<div class="a t" style="left:857.00px;top:131px;font-size:8.3px;color:#f0f0f0;letter-spacing:0.038px;">A-Master A</div>
<div class="a" style="left:837px;top:156px;width:234px;height:103px;background:#333333;"></div>
<svg class="a" style="left:848px;top:161px" width="21" height="26"><defs><linearGradient id="pp161" x1="0" y1="0" x2="0" y2="1"><stop offset="0.5" stop-color="#fff"/><stop offset="1" stop-color="#bbb"/></linearGradient></defs><rect x="0" y="0" width="21" height="25" fill="url(#pp161)"/><text x="10.5" y="16" font-size="7" font-family="Liberation Sans" fill="#222" text-anchor="middle">A</text></svg>
<div class="a t" style="left:856.5px;top:187px;font-size:7px;color:#dddddd;">4</div>
<svg class="a" style="left:848px;top:195px" width="21" height="26"><defs><linearGradient id="pp195" x1="0" y1="0" x2="0" y2="1"><stop offset="0.5" stop-color="#fff"/><stop offset="1" stop-color="#bbb"/></linearGradient></defs><rect x="0" y="0" width="21" height="25" fill="url(#pp195)"/><text x="10.5" y="16" font-size="7" font-family="Liberation Sans" fill="#222" text-anchor="middle">A</text></svg>
<div class="a t" style="left:856.5px;top:221px;font-size:7px;color:#dddddd;">5</div>
<svg class="a" style="left:848px;top:229px" width="21" height="26"><defs><linearGradient id="pp229" x1="0" y1="0" x2="0" y2="1"><stop offset="0.5" stop-color="#fff"/><stop offset="1" stop-color="#bbb"/></linearGradient></defs><rect x="0" y="0" width="21" height="25" fill="url(#pp229)"/><text x="10.5" y="16" font-size="7" font-family="Liberation Sans" fill="#222" text-anchor="middle">A</text></svg>
<div class="a t" style="left:856.5px;top:255px;font-size:7px;color:#dddddd;">6</div>
<div class="a t" style="left:856.5px;top:153px;font-size:7px;color:#dddddd;height:4px;overflow:hidden;">3</div>
<div class="a" style="left:1071px;top:156px;width:12px;height:103px;background:#1b1b1b;"></div>
<div class="a" style="left:1072px;top:193px;width:10px;height:22px;background:#555555;"></div>
<svg class="a" style="left:1071px;top:156px" width="12" height="103"><path d="M3 11L6 8L9 11M3 95L6 98L9 95" stroke="#bbb" fill="none"/></svg>
<div class="a t" style="left:859.00px;top:262px;font-size:8.5px;color:#f0f0f0;letter-spacing:-0.343px;">Page 7</div>
<div class="a" style="left:908px;top:259px;width:163px;height:15px;background:#151515;"></div>
<div class="a" style="left:922px;top:260px;width:135px;height:13px;background:#0b0b0b;"></div>
<svg class="a" style="left:908px;top:259px" width="163" height="15"><path d="M8 4.5L5.5 7.5L8 10.5M153 4.5L155.5 7.5L153 10.5" stroke="#eee" stroke-width="1.5" fill="none"/></svg>
<div class="a" style="left:916px;top:275px;width:165px;height:124px;background:#555555;"></div>
<div class="a" style="left:919px;top:278px;width:143px;height:16px;background:#3a3a3a;"></div>
<div class="a t" style="left:925.50px;top:281px;font-size:8.3px;color:#5a5a5a;letter-spacing:-0.035px;">Search</div>
<svg class="a" style="left:1064px;top:281px" width="12" height="12"><circle cx="5" cy="5" r="3" fill="none" stroke="#aaa" stroke-width="1.1"/><path d="M7 7L10 10" stroke="#aaa" stroke-width="1.2"/></svg>
<div class="a" style="left:919px;top:296px;width:144px;height:72px;background:#333333;"></div>
<div class="a" style="left:919px;top:296px;width:144px;height:12px;background:#0a78d4;"></div>
<svg class="a" style="left:920px;top:297px" width="11" height="11"><rect x="0.5" y="0.5" width="10" height="10" fill="#3a8ee0" stroke="#9cc8f2"/><path d="M0.5 0.5L10.5 10.5M10.5 0.5L0.5 10.5" stroke="#9cc8f2"/></svg>
<div class="a t" style="left:933.60px;top:298px;font-size:8.3px;color:#ffffff;letter-spacing:-0.273px;font-style:italic;">None</div>
<div class="a" style="left:920px;top:309px;width:10px;height:10px;background:#231f20;outline:1px solid #222;"></div>
<div class="a t" style="left:933.00px;top:310px;font-size:8.3px;color:#f0f0f0;letter-spacing:-0.410px;">Black</div>
<svg class="a" style="left:1050px;top:310px" width="8" height="8"><path d="M0 0H8L4 4Z" fill="#ff40c0"/><path d="M0 0L4 4L0 8Z" fill="#00b0f0"/><path d="M8 0L4 4L8 8Z" fill="#f0e000"/><path d="M0 8L4 4L8 8Z" fill="#111"/></svg>
<div class="a" style="left:920px;top:321px;width:10px;height:10px;background:#00aeef;outline:1px solid #222;"></div>
<div class="a t" style="left:933.00px;top:322px;font-size:8.3px;color:#f0f0f0;">Cyan</div>
<svg class="a" style="left:1050px;top:322px" width="8" height="8"><path d="M0 0H8L4 4Z" fill="#ff40c0"/><path d="M0 0L4 4L0 8Z" fill="#00b0f0"/><path d="M8 0L4 4L8 8Z" fill="#f0e000"/><path d="M0 8L4 4L8 8Z" fill="#111"/></svg>
<div class="a" style="left:920px;top:333px;width:10px;height:10px;background:#ec008c;outline:1px solid #222;"></div>
<div class="a t" style="left:933.00px;top:333px;font-size:8.3px;color:#f0f0f0;">Magenta</div>
<svg class="a" style="left:1050px;top:334px" width="8" height="8"><path d="M0 0H8L4 4Z" fill="#ff40c0"/><path d="M0 0L4 4L0 8Z" fill="#00b0f0"/><path d="M8 0L4 4L8 8Z" fill="#f0e000"/><path d="M0 8L4 4L8 8Z" fill="#111"/></svg>
<div class="a" style="left:920px;top:345px;width:10px;height:10px;background:#000000;outline:1px solid #222;"></div>
<div class="a t" style="left:933.00px;top:345px;font-size:8.3px;color:#f0f0f0;">Registration</div>
<div class="a" style="left:920px;top:357px;width:10px;height:10px;background:#ffffff;outline:1px solid #222;"></div>
<div class="a t" style="left:933.00px;top:357px;font-size:8.3px;color:#f0f0f0;">White</div>
<div class="a" style="left:1063px;top:296px;width:14px;height:72px;background:#1b1b1b;"></div>
<div class="a" style="left:1064px;top:309px;width:12px;height:39px;background:#555555;"></div>
<svg class="a" style="left:1063px;top:296px" width="14" height="72"><path d="M4 8L7 5L10 8M4 64L7 67L10 64" stroke="#bbb" fill="none"/></svg>
<svg class="a" style="left:922px;top:370px" width="160" height="29">
<path d="M3.2 20.8L3.6 18.6L9.2 13L11 14.8L5.4 20.4Z" fill="#555" stroke="#e0e0e0" stroke-width="1"/><path d="M8.6 12L12 15.4M10.3 11.5L12.8 9A1.5 1.5 0 0 1 15 11.2L12.5 13.7Z" stroke="#e8e8e8" fill="#e8e8e8" stroke-width="1.2"/>
<rect x="19.5" y="2.5" width="19" height="23" fill="#4a4a4a" stroke="#2a2a2a"/>
<rect x="42.5" y="1.5" width="9.5" height="9.5" fill="none" stroke="#2a2a2a"/><rect x="42.5" y="15.5" width="9.5" height="9.5" fill="none" stroke="#2a2a2a"/><rect x="54.0" y="1.5" width="9.5" height="9.5" fill="none" stroke="#2a2a2a"/><rect x="54.0" y="15.5" width="9.5" height="9.5" fill="none" stroke="#2a2a2a"/><rect x="65.5" y="1.5" width="9.5" height="9.5" fill="none" stroke="#2a2a2a"/><rect x="65.5" y="15.5" width="9.5" height="9.5" fill="none" stroke="#2a2a2a"/><rect x="77.0" y="1.5" width="9.5" height="9.5" fill="none" stroke="#2a2a2a"/><rect x="77.0" y="15.5" width="9.5" height="9.5" fill="none" stroke="#2a2a2a"/><rect x="88.5" y="1.5" width="9.5" height="9.5" fill="none" stroke="#2a2a2a"/><rect x="88.5" y="15.5" width="9.5" height="9.5" fill="none" stroke="#2a2a2a"/><rect x="100.0" y="1.5" width="9.5" height="9.5" fill="none" stroke="#2a2a2a"/><rect x="100.0" y="15.5" width="9.5" height="9.5" fill="none" stroke="#2a2a2a"/><rect x="111.5" y="1.5" width="9.5" height="9.5" fill="none" stroke="#2a2a2a"/><rect x="111.5" y="15.5" width="9.5" height="9.5" fill="none" stroke="#2a2a2a"/>
<rect x="141" y="7" width="10" height="11" fill="#9a9a9a"/><rect x="142" y="8" width="2" height="2" fill="#e05a70"/><rect x="145" y="8" width="2" height="2" fill="#e0a040"/><rect x="148" y="8" width="2" height="2" fill="#40c0b0"/><rect x="142" y="11" width="2" height="2" fill="#6080e0"/><rect x="145" y="11" width="2" height="2" fill="#60c060"/><rect x="142" y="14" width="2" height="2" fill="#50b0d0"/><path d="M149 13V20M145.5 16.5H152.5" stroke="#dddddd" stroke-width="1.6"/>
</svg>
<div class="a" style="left:4px;top:599px;width:1266px;height:68px;background:#333333;"></div>
<svg class="a" style="left:4px;top:599px" width="12" height="12"><path d="M1.5 2.5L8.5 9.5M8.5 2.5L1.5 9.5" stroke="#b8b8b8" stroke-width="1"/></svg>
<div class="a" style="left:17px;top:599px;width:1252px;height:17px;background:#1e1e1e;"></div>
<div class="a" style="left:108px;top:599px;width:91px;height:17px;background:#555555;"></div>
<div class="a" style="left:17px;top:616px;width:1252px;height:48px;background:#555555;"></div>
<div class="a" style="left:17px;top:663px;width:1252px;height:4px;background:#2a2a2a;"></div>
<div class="a" style="left:17px;top:664px;width:14px;height:3px;background:#1a1a1a;"></div>
<div class="a" style="left:31px;top:664px;width:1045px;height:3px;background:#464646;"></div>
<div class="a" style="left:1076px;top:664px;width:193px;height:3px;background:#1a1a1a;"></div>
<div class="a t" style="left:56.70px;top:603px;font-size:9px;color:#f2f2f2;letter-spacing:-0.767px;">Home</div>
<div class="a t" style="left:142.70px;top:603px;font-size:9px;color:#f2f2f2;letter-spacing:-0.245px;">Text Box</div>
<div class="a t" style="left:237.30px;top:603px;font-size:9px;color:#f2f2f2;letter-spacing:-0.323px;">Border</div>
<div class="a t" style="left:320.90px;top:603px;font-size:9px;color:#f2f2f2;letter-spacing:-0.429px;">Runaround</div>
<div class="a t" style="left:410.00px;top:603px;font-size:9px;color:#f2f2f2;letter-spacing:-0.263px;">Space/Align</div>
<div class="a t" style="left:498.90px;top:603px;font-size:9px;color:#f2f2f2;letter-spacing:-0.383px;">Drop Shadow</div>
<svg class="a" style="left:17px;top:599px" width="560" height="17">
<path d="M28 8L31.5 4.5L35 8V12H29Z" fill="#f2f2f2"/><path d="M27 8.5L31.5 4L36 8.5" stroke="#f2f2f2" fill="none"/>
<rect x="114.5" y="5.5" width="6.5" height="6.5" fill="none" stroke="#dddddd"/><rect x="113.5" y="4.5" width="2" height="2" fill="#fff"/><rect x="120" y="4.5" width="2" height="2" fill="#fff"/><rect x="113.5" y="11" width="2" height="2" fill="#fff"/><rect x="120" y="11" width="2" height="2" fill="#fff"/><path d="M116.3 7.3H119.3M117.8 7.3V11" stroke="#eeeeee" stroke-width="1.1"/>
<rect x="208.5" y="4.5" width="8" height="9" fill="none" stroke="#ddd"/><rect x="210.5" y="6.5" width="4" height="5" fill="#999" stroke="#ddd" stroke-width="0.6"/>
<path d="M291.5 10.5L293.8 6.8L295.6 9.2L296.6 8.4L298.5 10.5Z" fill="#d8d8d8"/><circle cx="295.2" cy="5.4" r="1" fill="#eee"/><rect x="298.6" y="4" width="1.5" height="5" fill="#999"/><rect x="291.5" y="10.5" width="8.5" height="1" fill="#ddd"/><rect x="291.5" y="12.2" width="8.5" height="1" fill="#ddd"/>
<rect x="381.6" y="4.6" width="2.6" height="6.4" fill="#eee"/><rect x="385.9" y="8" width="2.4" height="3" fill="#eee"/><rect x="381" y="11" width="8" height="1" fill="#ccc"/>
<rect x="469.5" y="3.5" width="5" height="5" fill="#333" stroke="#ddd"/><rect x="472" y="7" width="5" height="5" fill="#888"/>
</svg>
<svg class="a" style="left:31px;top:629px" width="24" height="23"><rect x="1.5" y="1.5" width="5" height="5" fill="#fff" stroke="#eee"/><rect x="1.5" y="9.0" width="5" height="5" fill="none" stroke="#eee"/><rect x="1.5" y="16.5" width="5" height="5" fill="none" stroke="#eee"/><rect x="9.0" y="1.5" width="5" height="5" fill="none" stroke="#eee"/><rect x="9.0" y="9.0" width="5" height="5" fill="none" stroke="#eee"/><rect x="9.0" y="16.5" width="5" height="5" fill="none" stroke="#eee"/><rect x="16.5" y="1.5" width="5" height="5" fill="none" stroke="#eee"/><rect x="16.5" y="9.0" width="5" height="5" fill="none" stroke="#eee"/><rect x="16.5" y="16.5" width="5" height="5" fill="none" stroke="#eee"/></svg>
<div class="a" style="left:67px;top:621px;width:1px;height:40px;background:#9a9a9a;"></div>
<div class="a t" style="left:71.70px;top:625px;font-size:9.2px;color:#e6e6e6;letter-spacing:0.172px;">X:</div>
<div class="a t" style="left:71.70px;top:643px;font-size:9.2px;color:#e6e6e6;letter-spacing:0.680px;">Y:</div>
<div class="a" style="left:86px;top:622px;width:49px;height:14px;background:#333333;border:1px solid #3c3c3c;box-sizing:border-box;"></div>
<div class="a t" style="left:89.00px;top:623px;font-size:9.3px;color:#f0f0f0;">1.38&quot;</div>
<div class="a" style="left:86px;top:640px;width:49px;height:15px;background:#333333;border:1px solid #3c3c3c;box-sizing:border-box;"></div>
<div class="a t" style="left:89.00px;top:642px;font-size:9.3px;color:#f0f0f0;">1.245&quot;</div>
<div class="a t" style="left:140.70px;top:625px;font-size:9.2px;color:#e6e6e6;letter-spacing:0.195px;">W:</div>
<div class="a t" style="left:142.60px;top:643px;font-size:9.2px;color:#e6e6e6;letter-spacing:-0.235px;">H:</div>
<div class="a" style="left:153px;top:622px;width:61px;height:14px;background:#333333;border:1px solid #3c3c3c;box-sizing:border-box;"></div>
<div class="a t" style="left:156.00px;top:623px;font-size:9.3px;color:#f0f0f0;">5.308&quot;</div>
<div class="a" style="left:153px;top:640px;width:61px;height:15px;background:#333333;border:1px solid #3c3c3c;box-sizing:border-box;"></div>
<div class="a t" style="left:156.00px;top:642px;font-size:9.3px;color:#f0f0f0;">3.005&quot;</div>
<svg class="a" style="left:214px;top:628px" width="9" height="25"><path d="M1 1.5H5.5V8M5.5 17V23.5H1" stroke="#e0e0e0" fill="none"/><path d="M4 9V12M7 9V12M3.5 12H7.5V14H3.5ZM4.5 14V17M6.5 14V17" stroke="#e0e0e0" fill="none" stroke-width="0.9"/></svg>
<div class="a" style="left:228px;top:621px;width:1px;height:40px;background:#9a9a9a;"></div>
<svg class="a" style="left:232px;top:624px" width="12" height="12"><path d="M2 10.5H11M2 10.5L9 2M6 6.5A4 4 0 0 1 7.5 10.5" stroke="#e6e6e6" fill="none" stroke-width="1.1"/></svg>
<div class="a" style="left:247px;top:622px;width:33px;height:14px;background:#333333;border:1px solid #3c3c3c;box-sizing:border-box;"></div>
<div class="a t" style="left:250.00px;top:623px;font-size:9.3px;color:#f0f0f0;">0°</div>
<svg class="a" style="left:283px;top:622px" width="9" height="15"><path d="M0.8 4.8L4.5 1L8.2 4.8M0.8 10L4.5 13.8L8.2 10" stroke="#c8c8c8" fill="none"/></svg>
<svg class="a" style="left:231px;top:642px" width="13" height="12"><path d="M1.5 11L4.5 1.5H12L9 11Z" stroke="#e6e6e6" fill="none"/></svg>
<div class="a" style="left:247px;top:640px;width:33px;height:15px;background:#333333;border:1px solid #3c3c3c;box-sizing:border-box;"></div>
<div class="a t" style="left:250.00px;top:642px;font-size:9.3px;color:#f0f0f0;">0°</div>
<svg class="a" style="left:283px;top:641px" width="9" height="15"><path d="M0.8 4.8L4.5 1L8.2 4.8M0.8 10L4.5 13.8L8.2 10" stroke="#c8c8c8" fill="none"/></svg>
<svg class="a" style="left:295px;top:623px" width="12" height="12"><path d="M1.5 11A8 8 0 0 1 9.5 3" stroke="#f0f0f0" fill="none" stroke-width="1.6"/><path d="M8 9.5H11L9.5 11Z" fill="#eee"/></svg>
<div class="a" style="left:315px;top:622px;width:31px;height:14px;background:#333333;border:1px solid #3c3c3c;box-sizing:border-box;"></div>
<div class="a t" style="left:318.00px;top:623px;font-size:9.3px;color:#f0f0f0;">0.139&quot;</div>
<svg class="a" style="left:349px;top:622px" width="9" height="15"><path d="M0.8 4.8L4.5 1L8.2 4.8M0.8 10L4.5 13.8L8.2 10" stroke="#c8c8c8" fill="none"/></svg>
<svg class="a" style="left:312px;top:643px" width="11" height="11"><circle cx="5.5" cy="5.5" r="4.3" fill="none" stroke="#bdbdbd"/><path d="M3.5 5.5H7.5M5.5 3.5L7.5 5.5L5.5 7.5" stroke="#ddd" fill="none"/></svg>
<div class="a" style="left:359px;top:621px;width:1px;height:40px;background:#9a9a9a;"></div>
<svg class="a" style="left:397px;top:622px" width="18" height="16"><rect x="0.5" y="0.5" width="13" height="13" fill="none" stroke="#a0a0a0"/><path d="M0.5 0.5L13.5 13.5M13.5 0.5L0.5 13.5" stroke="#a0a0a0"/><path d="M14 12H16V14H14Z" fill="#ddd"/></svg>
<div class="a" style="left:419px;top:621px;width:46px;height:15px;background:#333333;border:1px solid #3c3c3c;box-sizing:border-box;"></div>
<div class="a t" style="left:423.00px;top:623px;font-size:9.3px;color:#808080;">100%</div>
<svg class="a" style="left:452px;top:624px" width="10" height="8"><path d="M1.5 2L5 5.5L8.5 2" stroke="#cfcfcf" fill="none"/></svg>
<svg class="a" style="left:400px;top:642px" width="13" height="12"><rect x="0.5" y="0.5" width="8" height="8" fill="none" stroke="#b8b8b8"/><rect x="4" y="4" width="8" height="8" fill="#bbb"/><path d="M5 5H7V7H5ZM9 5H11V7H9ZM7 7H9V9H7ZM5 9H7V11H5ZM9 9H11V11H9Z" fill="#555"/></svg>
<div class="a" style="left:419px;top:640px;width:46px;height:15px;background:#333333;border:1px solid #3c3c3c;box-sizing:border-box;"></div>
<div class="a t" style="left:423.00px;top:642px;font-size:9.3px;color:#808080;">100%</div>
<svg class="a" style="left:452px;top:643px" width="10" height="8"><path d="M1.5 2L5 5.5L8.5 2" stroke="#cfcfcf" fill="none"/></svg>
<svg class="a" style="left:468px;top:626px" width="13" height="9"><circle cx="4.5" cy="4.5" r="3.8" fill="#777"/><circle cx="8.5" cy="4.5" r="3.8" fill="#777" opacity="0.8"/></svg>
<div class="a" style="left:484px;top:621px;width:57px;height:15px;background:#333333;border:1px solid #3c3c3c;box-sizing:border-box;"></div>
<svg class="a" style="left:528px;top:624px" width="10" height="8"><path d="M1.5 2L5 5.5L8.5 2" stroke="#cfcfcf" fill="none"/></svg>
<svg class="a" style="left:468px;top:642px" width="13" height="13"><circle cx="5" cy="8.5" r="3.8" fill="#8a8a8a"/><circle cx="8.5" cy="8.5" r="3.8" fill="#8a8a8a" opacity="0.8"/><path d="M1.5 1.5H8M4.8 1.5V7" stroke="#eee"/></svg>
<div class="a" style="left:484px;top:640px;width:57px;height:15px;background:#333333;border:1px solid #3c3c3c;box-sizing:border-box;"></div>
<div class="a t" style="left:488.00px;top:642px;font-size:9.3px;color:#f0f0f0;">Normal</div>
<svg class="a" style="left:528px;top:643px" width="10" height="8"><path d="M1.5 2L5 5.5L8.5 2" stroke="#cfcfcf" fill="none"/></svg>
<div class="a" style="left:545px;top:621px;width:1px;height:40px;background:#9a9a9a;"></div>
<svg class="a" style="left:551px;top:622px" width="10" height="12"><rect x="0.5" y="0.5" width="7" height="7" fill="#777" stroke="#999"/><rect x="2.5" y="3.5" width="7" height="8" fill="#6a6a6a" stroke="#999"/></svg>
<svg class="a" style="left:571px;top:622px" width="13" height="14"><rect x="0.5" y="0.5" width="5" height="12" fill="#444" stroke="#eee"/><rect x="6.5" y="0.5" width="5" height="12" fill="#444" stroke="#eee"/><path d="M1.5 4H4.5M1.5 7H4.5M1.5 10H4.5M7.5 4H10.5M7.5 7H10.5M7.5 10H10.5" stroke="#eee"/></svg>
<div class="a" style="left:590px;top:622px;width:34px;height:14px;background:#333333;border:1px solid #3c3c3c;box-sizing:border-box;"></div>
<div class="a t" style="left:593.00px;top:623px;font-size:9.3px;color:#f0f0f0;">1</div>
<svg class="a" style="left:626px;top:622px" width="9" height="15"><path d="M0.8 4.8L4.5 1L8.2 4.8M0.8 10L4.5 13.8L8.2 10" stroke="#c8c8c8" fill="none"/></svg>
<svg class="a" style="left:572px;top:643px" width="12" height="12"><rect x="0.5" y="0.5" width="10" height="10" fill="#ddd" stroke="#eee"/><path d="M5.5 1V10" stroke="#555" stroke-width="1.2"/><path d="M1 9H10" stroke="#888"/></svg>
<div class="a" style="left:590px;top:640px;width:34px;height:15px;background:#333333;border:1px solid #3c3c3c;box-sizing:border-box;"></div>
<div class="a t" style="left:593.00px;top:642px;font-size:9.3px;color:#f0f0f0;">0.167&quot;</div>
<svg class="a" style="left:626px;top:641px" width="9" height="15"><path d="M0.8 4.8L4.5 1L8.2 4.8M0.8 10L4.5 13.8L8.2 10" stroke="#c8c8c8" fill="none"/></svg>
<div class="a" style="left:644px;top:626px;width:8px;height:8px;border:1px solid #9a9a9a;border-radius:1px;box-sizing:border-box;"></div>
<svg class="a" style="left:658px;top:622px" width="12" height="13"><rect x="0.5" y="0.5" width="10.5" height="11.5" rx="1.5" fill="none" stroke="#9a9a9a"/><path d="M3.5 1V12M5.8 1V12M8 1V12" stroke="#9a9a9a"/></svg>
<div class="a" style="left:674px;top:621px;width:63px;height:15px;background:#333333;border:1px solid #3c3c3c;box-sizing:border-box;"></div>
<svg class="a" style="left:724px;top:624px" width="10" height="8"><path d="M1.5 2L5 5.5L8.5 2" stroke="#cfcfcf" fill="none"/></svg>
<div class="a" style="left:674px;top:640px;width:63px;height:15px;background:#333333;border:1px solid #3c3c3c;box-sizing:border-box;"></div>
<div class="a t" style="left:678.00px;top:642px;font-size:9.3px;color:#808080;">1 pt</div>
<svg class="a" style="left:724px;top:643px" width="10" height="8"><path d="M1.5 2L5 5.5L8.5 2" stroke="#cfcfcf" fill="none"/></svg>
<svg class="a" style="left:739px;top:641px" width="9" height="15"><path d="M0.8 4.8L4.5 1L8.2 4.8M0.8 10L4.5 13.8L8.2 10" stroke="#c8c8c8" fill="none"/></svg>
<div class="a" style="left:752px;top:622px;width:14px;height:14px;background:#2e2e2e;border:1px solid #3c3c3c;box-sizing:border-box;"></div>
<div class="a" style="left:766px;top:635px;width:2px;height:2px;background:#ddd;"></div>
<div class="a" style="left:771px;top:621px;width:44px;height:15px;background:#333333;border:1px solid #3c3c3c;box-sizing:border-box;"></div>
<div class="a t" style="left:775.00px;top:623px;font-size:9.3px;color:#808080;">100%</div>
<svg class="a" style="left:802px;top:624px" width="10" height="8"><path d="M1.5 2L5 5.5L8.5 2" stroke="#cfcfcf" fill="none"/></svg>
<svg class="a" style="left:753px;top:642px" width="13" height="12"><rect x="0.5" y="0.5" width="8" height="8" fill="none" stroke="#b8b8b8"/><rect x="4" y="4" width="8" height="8" fill="#bbb"/><path d="M5 5H7V7H5ZM9 5H11V7H9ZM7 7H9V9H7ZM5 9H7V11H5ZM9 9H11V11H9Z" fill="#555"/></svg>
<div class="a" style="left:771px;top:640px;width:44px;height:15px;background:#333333;border:1px solid #3c3c3c;box-sizing:border-box;"></div>
<div class="a t" style="left:775.00px;top:642px;font-size:9.3px;color:#808080;">100%</div>
<svg class="a" style="left:802px;top:643px" width="10" height="8"><path d="M1.5 2L5 5.5L8.5 2" stroke="#cfcfcf" fill="none"/></svg>
<div class="a" style="left:820px;top:621px;width:1px;height:40px;background:#9a9a9a;"></div>
<svg class="a" style="left:827px;top:623px" width="54" height="14"><rect x="0.5" y="0.5" width="8" height="12" fill="#666" stroke="#999"/><rect x="2" y="7" width="5" height="3" fill="#bbb"/><rect x="14.5" y="0.5" width="8" height="12" fill="#666" stroke="#999"/><rect x="16" y="3" width="5" height="6" fill="#bbb"/><rect x="28.5" y="0.5" width="8" height="12" fill="#666" stroke="#999"/><rect x="30" y="5" width="5" height="3" fill="#bbb"/><rect x="42.5" y="0.5" width="8" height="12" fill="#666" stroke="#999"/><rect x="44" y="2" width="5" height="8" fill="#bbb"/></svg>
<svg class="a" style="left:828px;top:643px" width="12" height="12"><rect x="0.5" y="0.5" width="10" height="10" rx="1" fill="#777" stroke="#999"/><path d="M2 4H9M4 7H9" stroke="#ccc" stroke-width="1.3"/></svg>
<div class="a" style="left:847px;top:642px;width:34px;height:14px;background:#333333;border:1px solid #3c3c3c;box-sizing:border-box;"></div>
<div class="a t" style="left:850.00px;top:643px;font-size:9.3px;color:#808080;">0&quot;</div>
<svg class="a" style="left:883px;top:641px" width="9" height="15"><path d="M0.8 4.8L4.5 1L8.2 4.8M0.8 10L4.5 13.8L8.2 10" stroke="#c8c8c8" fill="none"/></svg>
<div class="a" style="left:898px;top:624px;width:8px;height:8px;border:1px solid #a0a0a0;box-sizing:border-box;"></div>
<div class="a t" style="left:907.00px;top:623px;font-size:9px;color:#e6e6e6;letter-spacing:-0.216px;">Multiple Insets</div>
<svg class="a" style="left:897px;top:644px" width="10" height="10"><rect x="0.5" y="0.5" width="8" height="8" fill="#f0f0f0"/><path d="M2 4.5L4 6.5L7.5 2.5" stroke="#333" fill="none" stroke-width="1.2"/></svg>
<svg class="a" style="left:914px;top:642px" width="13" height="13"><rect x="1" y="1" width="11" height="11" rx="2" fill="none" stroke="#ddd" stroke-dasharray="1.5 1"/><rect x="3.5" y="3.5" width="6" height="6" fill="none" stroke="#eee"/></svg>
<svg class="a" style="left:975px;top:624px" width="11" height="10"><rect x="0.5" y="0.5" width="10" height="9" fill="#ccc" stroke="#eee"/><rect x="2" y="2" width="7" height="6" fill="#666"/></svg>
<div class="a" style="left:993px;top:622px;width:34px;height:14px;background:#333333;border:1px solid #3c3c3c;box-sizing:border-box;"></div>
<div class="a t" style="left:996.00px;top:623px;font-size:9.3px;color:#f4f4f4;">0 pt</div>
<svg class="a" style="left:1029px;top:622px" width="9" height="15"><path d="M0.8 4.8L4.5 1L8.2 4.8M0.8 10L4.5 13.8L8.2 10" stroke="#c8c8c8" fill="none"/></svg>
<svg class="a" style="left:975px;top:643px" width="11" height="10"><rect x="0.5" y="0.5" width="10" height="9" fill="#8a8a8a" stroke="#aaa"/><rect x="2" y="2" width="7" height="6" fill="#666"/></svg>
<div class="a" style="left:993px;top:640px;width:34px;height:15px;background:#333333;border:1px solid #3c3c3c;box-sizing:border-box;"></div>
<div class="a t" style="left:996.00px;top:642px;font-size:9.3px;color:#808080;">0 pt</div>
<svg class="a" style="left:1029px;top:641px" width="9" height="15"><path d="M0.8 4.8L4.5 1L8.2 4.8M0.8 10L4.5 13.8L8.2 10" stroke="#c8c8c8" fill="none"/></svg>
<svg class="a" style="left:1050px;top:624px" width="11" height="10"><rect x="0.5" y="0.5" width="10" height="9" fill="#8a8a8a" stroke="#aaa"/><rect x="2" y="2" width="7" height="6" fill="#666"/></svg>
<div class="a" style="left:1067px;top:622px;width:34px;height:14px;background:#333333;border:1px solid #3c3c3c;box-sizing:border-box;"></div>
<div class="a t" style="left:1070.00px;top:623px;font-size:9.3px;color:#808080;">0 pt</div>
<svg class="a" style="left:1103px;top:622px" width="9" height="15"><path d="M0.8 4.8L4.5 1L8.2 4.8M0.8 10L4.5 13.8L8.2 10" stroke="#c8c8c8" fill="none"/></svg>
<svg class="a" style="left:1050px;top:643px" width="11" height="10"><rect x="0.5" y="0.5" width="10" height="9" fill="#8a8a8a" stroke="#aaa"/><rect x="2" y="2" width="7" height="6" fill="#666"/></svg>
<div class="a" style="left:1067px;top:640px;width:34px;height:15px;background:#333333;border:1px solid #3c3c3c;box-sizing:border-box;"></div>
<div class="a t" style="left:1070.00px;top:642px;font-size:9.3px;color:#808080;">0 pt</div>
<svg class="a" style="left:1103px;top:641px" width="9" height="15"><path d="M0.8 4.8L4.5 1L8.2 4.8M0.8 10L4.5 13.8L8.2 10" stroke="#c8c8c8" fill="none"/></svg>
<div class="a" style="left:1120px;top:621px;width:1px;height:40px;background:#9a9a9a;"></div>
<svg class="a" style="left:1130px;top:623px" width="12" height="13"><text x="0" y="5" font-size="5" font-family="Liberation Sans" fill="#eee">A</text><path d="M3 11.5H11M3.5 11L10 4.5M7 8A3 3 0 0 1 8.5 11.5" stroke="#eee" fill="none" stroke-width="1.1"/></svg>
<div class="a" style="left:1149px;top:622px;width:34px;height:14px;background:#333333;border:1px solid #3c3c3c;box-sizing:border-box;"></div>
<div class="a t" style="left:1152.00px;top:623px;font-size:9.3px;color:#f0f0f0;">0°</div>
<svg class="a" style="left:1185px;top:622px" width="9" height="15"><path d="M0.8 4.8L4.5 1L8.2 4.8M0.8 10L4.5 13.8L8.2 10" stroke="#c8c8c8" fill="none"/></svg>
<svg class="a" style="left:1131px;top:641px" width="12" height="13"><text x="0" y="5" font-size="5" font-family="Liberation Sans" fill="#eee">A</text><path d="M4 12L6 7H11L9 12Z" fill="#eee"/></svg>
<div class="a" style="left:1149px;top:640px;width:34px;height:15px;background:#333333;border:1px solid #3c3c3c;box-sizing:border-box;"></div>
<div class="a t" style="left:1152.00px;top:642px;font-size:9.3px;color:#f0f0f0;">0°</div>
<svg class="a" style="left:1185px;top:641px" width="9" height="15"><path d="M0.8 4.8L4.5 1L8.2 4.8M0.8 10L4.5 13.8L8.2 10" stroke="#c8c8c8" fill="none"/></svg>
<svg class="a" style="left:1200px;top:624px" width="10" height="30"><rect x="0.75" y="0.75" width="8.5" height="9.5" fill="#333" stroke="#eee" stroke-width="1.5"/><path d="M2.5 5.5H7M5 3L7.5 5.5L5 8" stroke="#eee" fill="none" stroke-width="1.3"/><rect x="0.75" y="19.75" width="8.5" height="9.5" fill="#333" stroke="#eee" stroke-width="1.5"/><path d="M5 27V22M2.5 24.5L5 22L7.5 24.5" stroke="#eee" fill="none" stroke-width="1.3"/></svg>
<div class="a" style="left:1215px;top:621px;width:1px;height:40px;background:#9a9a9a;"></div>
<svg class="a" style="left:1222px;top:623px" width="14" height="32"><path d="M3 1V10M1 10H6M1.5 4L3 2L4.5 4M1.5 7H4.5" stroke="#ddd" fill="none"/><path d="M13 5H8M9.5 3.5L8 5L9.5 6.5" stroke="#ddd" fill="none"/><path d="M3 21V30M1 30H6M1.5 24L3 22L4.5 24M1.5 27H4.5" stroke="#ddd" fill="none"/><path d="M11 21V30M9.5 22.5L11 21L12.5 22.5M9.5 28.5L11 30L12.5 28.5" stroke="#ddd" fill="none"/></svg>
<div class="a" style="left:1240px;top:621px;width:29px;height:16px;background:#333333;"></div>
<div class="a t" style="left:1242.00px;top:623px;font-size:9.3px;color:#f0f0f0;letter-spacing:-0.568px;">Ascent</div>
<div class="a" style="left:1241px;top:640px;width:28px;height:15px;background:#333333;"></div>
<div class="a t" style="left:1243.50px;top:642px;font-size:9.3px;color:#f0f0f0;">0&quot;</div>
<svg class="a" style="left:270px;top:490px" width="60" height="140"><path d="M22.6 9.3H38.8V71H46.5L30.7 127L14.5 71H22.6Z" fill="none" stroke="#ffff00" stroke-width="4.2" stroke-linejoin="miter" stroke-miterlimit="4"/></svg>
</body></html>
